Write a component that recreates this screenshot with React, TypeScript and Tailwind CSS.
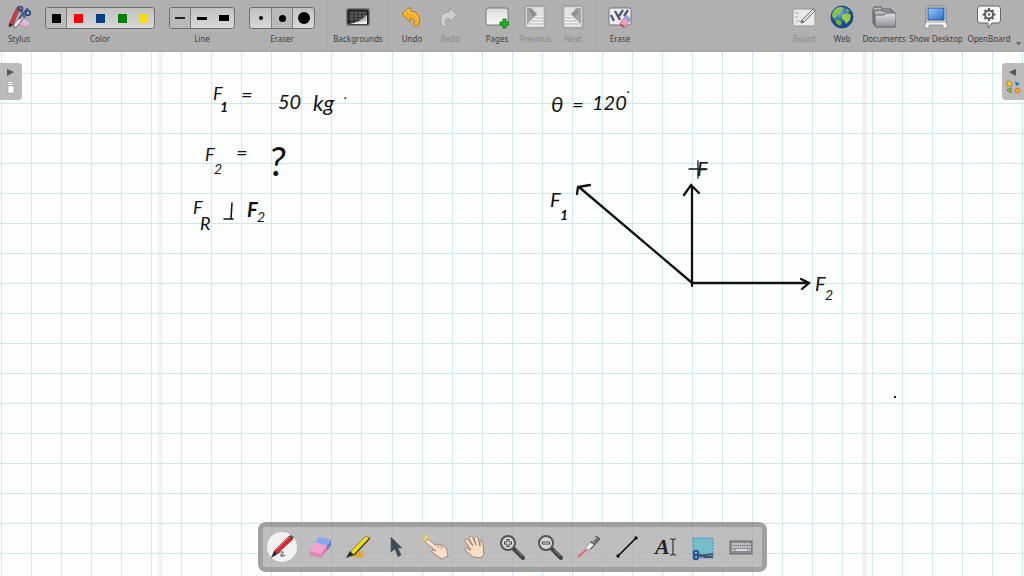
import type { ReactNode } from "react";
import clsx from "clsx";

/* ---------- top bar icons, 24 x 24 ---------- */

function Svg({ children, size = 24 }: { children: ReactNode; size?: number }) {
  return (
    <svg width={size} height={size} viewBox={`0 0 ${size} ${size}`} fill="none" aria-hidden="true">
      {children}
    </svg>
  );
}

const StylusIcon = () => (
  <Svg>
    <path d="M2 19 L10 2 L13 3.500 L6 20 L2 22Z" fill="#cf3a3a" stroke="#8c3b3b" strokeWidth=".6" />
    <path d="M2 22 L2.500 18.500 L6 20Z" fill="#222" />
    <path d="M7 19 L16 8 L18.500 10 L10 21.500 L7 23Z" fill="#e8e8ee" stroke="#555a70" strokeWidth=".8" />
    <path d="M13 4 L18 13 M21 3 L12 14" stroke="#47608f" strokeWidth="2.200" />
    <circle cx="13.500" cy="3.500" r="2" stroke="#2f4678" strokeWidth="1.700" />
    <circle cx="21" cy="8" r="2.300" stroke="#2f4678" strokeWidth="1.700" />
    <path d="M12 19 L17 14 L23 18 L18 23Z" fill="#eda6cb" stroke="#b87c9c" strokeWidth=".6" />
    <path d="M15 16 L17 14 L23 18 L20.500 20.500Z" fill="#cfc6ea" />
  </Svg>
);

const BackgroundsIcon = () => (
  <Svg>
    <rect x="0" y="3" width="24" height="18" rx="2" fill="#7c7c7c" />
    <rect x="2" y="5" width="20" height="14" rx="1" fill="#2a2a2a" stroke="#111" />
    <path d="M3 8H21M3 11H21M3 14H21M6 6V18M10 6V18M14 6V18M18 6V18" stroke="#707070" strokeWidth=".8" />
    <path d="M3 19 Q15 17 21 10 V19Z" fill="#eee" />
    <path d="M9 18 Q16 16 21 10 L20 16Z" fill="#b8b8b8" />
  </Svg>
);

const arrowPath = "M2 9 L10 2 V6 C18 6 22 13 18 21 C16 22 13 21 13 20 C16 16 14 13 10 13 V17 Z";

const UndoIcon = () => (
  <Svg>
    <path d={arrowPath} fill="#f5ae28" stroke="#bd7c16" />
    <path d="M4 9 L9 4.500 V7.500 C14 7.500 18 11 18 16" stroke="#ffd56c" />
  </Svg>
);

const RedoIcon = () => (
  <Svg>
    <g transform="matrix(-.95 0 0 .95 21 1)">
      <path d={arrowPath} fill="#cdcdcd" stroke="#9c9c9c" />
    </g>
  </Svg>
);

const PagesIcon = () => (
  <Svg>
    <defs>
      <linearGradient id="paper" x2="0" y2="1">
        <stop stopColor="#dadada" />
        <stop offset="1" stopColor="#fafafa" />
      </linearGradient>
    </defs>
    <rect x="1" y="3" width="22" height="17" rx="2" fill="url(#paper)" stroke="#777" />
    <path d="M18 14h3v3h3v3h-3v3h-3v-3h-3v-3h3z" fill="#16bc16" stroke="#15771b" />
  </Svg>
);

function PageTurn() {
  return (
    <>
      <rect x="2" y="1" width="20" height="22" rx="2" fill="#d2d2d2" stroke="#8f8f8f" />
      <path d="M4 3 H9 L14 9 L4 19Z" fill="#a3a3a3" />
      <path d="M5 3 L14 9 L10 12Z" fill="#8c8c8c" />
      <path d="M9 3 L14 9 V11 H20 V3Z" fill="#e2e2e2" />
      <path d="M4 21 L13 11 H20 V21Z" fill="#f2f2f2" />
      <path d="M12 13H20M9 16H20M6 19H20" stroke="#b0b0b0" />
    </>
  );
}

const PreviousIcon = () => (
  <Svg>
    <PageTurn />
  </Svg>
);

const NextIcon = () => (
  <Svg>
    <g transform="matrix(-1 0 0 1 24 0)">
      <PageTurn />
    </g>
  </Svg>
);

const EraseIcon = () => (
  <Svg>
    <rect x="1" y="3" width="22" height="17" rx="2" fill="#eee" stroke="#777" />
    <path d="M3 10 L6 16 M7 6 L12 15 M15 5 L11 11 M20 5 L16 11" stroke="#4a5870" strokeWidth="2.300" />
    <path d="M12 18 L18 10 L23 14 L17 22Z" fill="#ef9bc2" stroke="#aa7290" strokeWidth=".6" />
    <path d="M18 10 L23 14 L21 17 L16 13Z" fill="#88a7e5" />
    <path d="M12 18 L17 22 L16 23 L12 20Z" fill="#d14444" />
  </Svg>
);

const BoardIcon = () => (
  <Svg>
    <rect x="1" y="4" width="22" height="17" rx="1" fill="#eaeaea" stroke="#999" />
    <path d="M3 8H7M3 12H6M4 17C7 14 9 17 11 18" stroke="#aaa" />
    <path d="M9 18 L10 15 L21 4 L23 6 L12 17Z" fill="#ddd" stroke="#777" />
    <path d="M9 18 L10 15 L12 17Z" fill="#666" />
  </Svg>
);

const WebIcon = () => (
  <Svg>
    <defs>
      <radialGradient id="globe" cx=".4" cy=".3">
        <stop stopColor="#71aee9" />
        <stop offset="1" stopColor="#174a91" />
      </radialGradient>
    </defs>
    <circle cx="12" cy="12" r="11" fill="url(#globe)" stroke="#234671" />
    <path d="M3 7 Q6 2 11 2 L14 4 L11 6 L10 9 L7 10 L5 14 L2 11Z" fill="#89c54b" />
    <path d="M12 10 L17 8 L21 10 L20 15 L16 19 L14 15 L12 14Z" fill="#9acb45" />
    <path d="M6 14 L10 15 L12 18 L10 21 L6 18Z" fill="#73af3d" />
    <path d="M16 4 L20 6 L17 7Z" fill="#a4ce57" />
  </Svg>
);

// filled panels rather than a line icon: the folders overlap
const DocumentsIcon = () => (
  <Svg>
    <defs>
      <linearGradient id="folder" x2="0" y2="1">
        <stop stopColor="#dedee2" />
        <stop offset="1" stopColor="#8f9299" />
      </linearGradient>
    </defs>
    <path d="M1 18 V4 L2 2 H9 L10 4 H19 V18Z" fill="#c2c3c7" stroke="#51545a" />
    <path d="M2 20 V7 L3 5 H10 L11 6 H21 V20Z" fill="#b4b6bb" stroke="#51545a" />
    <path d="M3 21 V10 H12 L14 8 H24 V21 L23 22 H4Z" fill="url(#folder)" stroke="#5d6067" />
  </Svg>
);

const DesktopIcon = () => (
  <Svg>
    <defs>
      <linearGradient id="screen" x2="1" y2="1">
        <stop stopColor="#9dcbfb" />
        <stop offset="1" stopColor="#256dc8" />
      </linearGradient>
    </defs>
    <rect x="2" y="1" width="20" height="17" rx="1" fill="#eee" stroke="#777" />
    <rect x="4" y="3" width="16" height="12" fill="url(#screen)" stroke="#234f91" />
    <path d="M1 23 V19 L3 17 H21 L23 19 V23 H19 V20 H5 V23Z" fill="#f5f5f5" stroke="#888" strokeWidth=".7" />
  </Svg>
);

const OpenBoardIcon = () => (
  <Svg>
    <path d="M2 1 H22 L23.500 3 V16 L22 18 H15 L11 23 V18 H2 L.5 16 V3Z" fill="#f5f5f5" stroke="#666" />
    <circle cx="12" cy="9.500" r="4" stroke="#5c5c5c" strokeWidth="2" />
    <path
      d="M12 3V5M12 14V16M5.500 9.500H8M16 9.500H18.500M7.500 5L9 6.500M15 12.500L16.500 14M16.500 5L15 6.500M9 12.500L7.500 14"
      stroke="#5c5c5c"
      strokeWidth="2"
    />
    <circle cx="12" cy="9.500" r="1.200" fill="#5c5c5c" />
  </Svg>
);

/* ---------- palette icons, 32 x 32 ---------- */

const PenIcon = () => (
  <Svg size={32}>
    <circle cx="16" cy="16" r="15" fill="#f2f2f2" />
    <path d="M8 25 C15 19 20 20 15 24 C14 26 18 25 19 24" stroke="#666" strokeWidth="1.200" />
    <path d="M8 20 L23 5 L27 8 L11 23Z" fill="#d52a2c" stroke="#8c3535" strokeWidth=".7" />
    <path d="M10 19 L23 6" stroke="#f18b86" />
    <path d="M23 5 L25 4 L28 6 L26 9Z" fill="#555" />
    <path d="M5 27 L8 20 L11 23Z" fill="#292929" />
  </Svg>
);

const RubberIcon = () => (
  <Svg size={32}>
    <path d="M5 20 L15 6 L27 9 V14 L17 27 L5 24Z" fill="#d87fae" />
    <path d="M5 20 L15 6 L27 9 L17 23Z" fill="#f3a4cd" />
    <path d="M11 11 L15 6 L27 9 L23 15Z" fill="#86aaf0" />
    <path d="M23 15 L27 9 V14 L23 20Z" fill="#6080c5" />
    <path d="M5 20 L17 23 V27 L5 24Z" fill="#db8fb5" />
  </Svg>
);

const MarkerIcon = () => (
  <Svg size={32}>
    <path d="M8 26 L16 21 L22 20 L20 23 L23 25 L18 27 L13 26Z" fill="#e0a93a" />
    <path d="M8 21 L24 5 L28 7 L12 24Z" fill="#f5dd18" stroke="#6f6925" strokeWidth=".7" />
    <path d="M12 24 L28 7" stroke="#3d3a20" strokeWidth="1.200" />
    <path d="M8 20 L12 24 L4 27Z" fill="#292929" />
  </Svg>
);

const PointerIcon = () => (
  <Svg size={32}>
    <path d="M10 6 L21 17 L17 17 L20 24 L17 26 L14 18 L10 21Z" fill="#3f4856" stroke="#606978" strokeWidth=".7" />
  </Svg>
);

const FingerIcon = () => (
  <Svg size={32}>
    <path d="M7 2V13M1 8H13M3 4L11 12M11 4L3 12" stroke="#e5dc65" strokeWidth="1.200" strokeDasharray="2 1" />
    <path
      d="M7 9 C9 7 11 10 16 14 L18 13 L21 14 L23 14 L26 16 C28 17 28 21 29 25 L23 28 C20 26 17 25 13 21 C12 19 14 18 17 20 L7 12 C6 11 6 10 7 9Z"
      fill="#f9ddc6"
      stroke="#a08270"
    />
    <path d="M18 14L20 17M22 15L23 18" stroke="#b69581" />
  </Svg>
);

const HandIcon = () => (
  <Svg size={32}>
    <path
      d="M15 26 L8 20 C5 17 8 16 10 18 L13 19 L7 10 C6 8 9 7 10 9 L15 15 L11 7 C11 4 14 5 15 7 L18 14 L16 7 C17 4 19 5 20 7 L22 15 L22 10 C24 8 25 11 25 14 L26 23 L23 27 Z"
      fill="#f9ddc6"
      stroke="#a08270"
    />
  </Svg>
);

function MagnifierIcon({ plus }: { plus?: boolean }) {
  return (
    <Svg size={32}>
      <path d="M18 18 L27 27" stroke="#444" strokeWidth="4" strokeLinecap="round" />
      <path d="M20 19 L26 25" stroke="#888" />
      <circle cx="12" cy="12" r="7" fill="#d7d7d7" stroke="#555" strokeWidth="2" />
      <path d={plus ? "M8 12H16M12 8V16" : "M8 12H16"} stroke="#444" strokeWidth="3" />
      <path d={plus ? "M9 12H15M12 9V15" : "M9 12H15"} stroke="#fff" />
    </Svg>
  );
}

const LaserIcon = () => (
  <Svg size={32}>
    <path d="M5 26 L14 18" stroke="#e66767" strokeWidth="2" />
    <path d="M14 16 L23 5 L27 8 L18 18Z" fill="#777" stroke="#4c4c4c" />
    <path d="M12 18 L17 11 L21 14 L17 18 L13 19Z" fill="#eee" stroke="#777" strokeWidth=".6" />
    <path d="M19 10 L23 6" stroke="#d2d2d2" strokeWidth="1.500" />
  </Svg>
);

const LineIcon = () => (
  <Svg size={32}>
    <path d="M7 25 L25 7" stroke="#111" strokeWidth="1.700" />
    <circle cx="7" cy="25" r="1.700" fill="#111" />
    <circle cx="25" cy="7" r="1.700" fill="#111" />
  </Svg>
);

const TextIcon = () => (
  <Svg size={32}>
    <text x="5" y="23" fontFamily="'Liberation Serif', serif" fontSize="22" fontStyle="italic" fontWeight="700" fill="#222">
      A
    </text>
    <path d="M20 8 H22 L23 9 L24 8 H26 M23 9 V23 M20 24 H22 L23 23 L24 24 H26" stroke="#333" strokeWidth="1.200" />
  </Svg>
);

const CaptureIcon = () => (
  <Svg size={32}>
    <rect x="5" y="7" width="20" height="20" fill="#75bfca" stroke="#5289d5" strokeDasharray="2 1" />
    <circle cx="8" cy="22" r="2.300" stroke="#244d95" strokeWidth="1.800" />
    <circle cx="8" cy="26" r="2.300" stroke="#244d95" strokeWidth="1.800" />
    <path d="M10 23 L17 26 H25M10 25 L17 24 L25 23" stroke="#455572" strokeWidth="2" />
  </Svg>
);

const KeyboardIcon = () => (
  <Svg size={32}>
    <rect x="4" y="10" width="22" height="13" fill="#8b8d94" stroke="#666870" />
    <path d="M6 13H25M6 16H25M6 19H9M22 19H25" stroke="#e6e6e8" strokeWidth="1.600" strokeDasharray="1.500 .7" />
    <path d="M10 19H21" stroke="#eee" strokeWidth="1.600" />
  </Svg>
);

/* ---------- top bar ---------- */

type ToolProps = { label: string; icon: ReactNode; width?: string; disabled?: boolean };

function Tool({ label, icon, width = "w-[38px]", disabled }: ToolProps) {
  return (
    <button
      disabled={disabled}
      className={clsx(
        "flex shrink-0 flex-col items-center gap-1 pt-[5px] whitespace-nowrap",
        width,
        disabled ? "text-[#8b8b8b]" : "text-[#404040]",
      )}
    >
      {icon}
      <span className="leading-3">{label}</span>
    </button>
  );
}

type Choice = { name: string; mark: string };

const colors: Choice[] = [
  { name: "Black", mark: "size-[9px] bg-black" },
  { name: "Red", mark: "size-[9px] bg-[#fe0000]" },
  { name: "Blue", mark: "size-[9px] bg-[#003f85]" },
  { name: "Green", mark: "size-[9px] bg-[#008000]" },
  { name: "Yellow", mark: "size-[9px] bg-[#ffdf00]" },
];

const lines: Choice[] = [
  { name: "Fine", mark: "h-[2px] w-[10px] bg-[#222222]" },
  { name: "Medium", mark: "h-[3px] w-[10px] bg-black" },
  { name: "Strong", mark: "h-[6px] w-[10px] bg-black" },
];

const erasers: Choice[] = [
  { name: "Small", mark: "size-1 rounded-full bg-black" },
  { name: "Medium", mark: "size-[7px] rounded-full bg-black" },
  { name: "Large", mark: "size-3 rounded-full bg-black" },
];

function ChoiceGroup({ label, choices, active }: { label: string; choices: Choice[]; active: number }) {
  return (
    <div role="group" aria-label={label} className="flex shrink-0 flex-col items-center gap-1 pt-[7px]">
      <div className="flex h-[22px] overflow-hidden rounded-[3px] border border-[#707070] bg-linear-to-b from-[#c2c2c2] to-[#d8d8d8]">
        {choices.map((c, i) => (
          <button
            key={c.name}
            aria-label={c.name}
            aria-pressed={i === active}
            className={clsx(
              "flex w-[22px] items-center justify-center first:w-[21px] last:w-[21px]",
              i === active && "bg-[#b9b9b9]",
              i === active && i > 0 && "border-l border-[#808080]",
              i === active && "border-r border-[#808080]",
            )}
          >
            <span className={c.mark} />
          </button>
        ))}
      </div>
      <span className="leading-3 text-[#404040]">{label}</span>
    </div>
  );
}

function TopBar() {
  return (
    <header className="flex h-[52px] justify-between border-b border-[#a4a4a4] bg-[#b0b0b0] text-[8px]">
      <div className="flex">
        <Tool label="Stylus" icon={<StylusIcon />} />
        <div className="flex gap-[14px] pr-3 pl-[7px]">
          <ChoiceGroup label="Color" choices={colors} active={0} />
          <ChoiceGroup label="Line" choices={lines} active={0} />
          <ChoiceGroup label="Eraser" choices={erasers} active={1} />
        </div>
        <div className="flex border-x border-[#aaaaaa]">
          <Tool label="Backgrounds" icon={<BackgroundsIcon />} width="w-[60px]" />
        </div>
        <div className="flex border-r border-[#aaaaaa] px-1">
          <Tool label="Undo" icon={<UndoIcon />} />
          <Tool label="Redo" icon={<RedoIcon />} disabled />
        </div>
        <div className="flex border-r border-[#aaaaaa] px-1">
          <Tool label="Pages" icon={<PagesIcon />} />
          <Tool label="Previous" icon={<PreviousIcon />} disabled />
          <Tool label="Next" icon={<NextIcon />} disabled />
        </div>
        <div className="flex px-1">
          <Tool label="Erase" icon={<EraseIcon />} />
        </div>
      </div>
      <div className="flex">
        <Tool label="Board" icon={<BoardIcon />} disabled />
        <Tool label="Web" icon={<WebIcon />} />
        <Tool label="Documents" icon={<DocumentsIcon />} width="w-[46px]" />
        <Tool label="Show Desktop" icon={<DesktopIcon />} width="w-[58px]" />
        <Tool label="OpenBoard" icon={<OpenBoardIcon />} width="w-12" />
        <button aria-label="More" className="flex w-[11px] items-end justify-center pb-[5px]">
          <svg width="5" height="4" viewBox="0 0 5 4" aria-hidden="true">
            <path d="M0 0H5L2.500 3.500Z" fill="#666" />
          </svg>
        </button>
      </div>
    </header>
  );
}

/* ---------- board ---------- */

// page coordinates: the board starts under the 52px bar
const BAR = 52;
const PITCH = 30.04;

const notes = [
  { t: "F", x: 213, y: 100, s: 18 },
  { t: "1", x: 220, y: 112, s: 14, bold: true },
  { t: "=", x: 241, y: 102, s: 20 },
  { t: "50", x: 278, y: 109, s: 20 },
  { t: "kg", x: 313, y: 111, s: 22 },
  { t: ".", x: 344, y: 99, s: 14 },
  { t: "F", x: 205, y: 161, s: 18 },
  { t: "2", x: 214, y: 174, s: 14 },
  { t: "=", x: 236, y: 160, s: 20 },
  { t: "?", x: 269, y: 176, s: 40 },
  { t: "F", x: 193, y: 214, s: 18 },
  { t: "R", x: 200, y: 230, s: 18 },
  { t: "F", x: 247, y: 217, s: 20, bold: true },
  { t: "2", x: 257, y: 222, s: 14 },
  { t: "θ", x: 551, y: 112, s: 22 },
  { t: "=", x: 572, y: 112, s: 20 },
  { t: "120", x: 592, y: 110, s: 20 },
  { t: ".", x: 627, y: 93, s: 14 },
  { t: "F", x: 697, y: 176, s: 20 },
  { t: "F", x: 550, y: 207, s: 20 },
  { t: "1", x: 560, y: 220, s: 14, bold: true },
  { t: "F", x: 815, y: 291, s: 20 },
  { t: "2", x: 825, y: 300, s: 14 },
];

function Board() {
  return (
    <svg className="w-full flex-1 bg-[#fdffff]" role="img" aria-label="Whiteboard">
      <g transform={`translate(0 ${-BAR})`}>
        <rect x="158" y="52" width="5" height="100%" fill="#f4f3f3" />
        <rect x="862" y="52" width="5" height="100%" fill="#f1f1f1" />
        {Array.from({ length: 90 }, (_, i) => (
          <rect key={`v${i}`} x={Math.round(1 + i * PITCH)} y="52" width="1" height="100%" fill="#cfebef" />
        ))}
        {Array.from({ length: 60 }, (_, i) => (
          <rect key={`h${i}`} x="0" y={Math.round(72.6 + i * PITCH)} width="100%" height="1" fill="#cfe9eb" />
        ))}

        <g fill="#111" fontFamily="Lato, sans-serif" fontStyle="italic">
          {notes.map((n, i) => (
            <text key={i} x={n.x} y={n.y} fontSize={n.s} fontWeight={n.bold ? 700 : 400}>
              {n.t}
            </text>
          ))}
        </g>

        <g stroke="#111" strokeWidth="2" strokeLinecap="round" fill="none">
          {/* perpendicular sign */}
          <path d="M232 203 L231 219 M224 219 H233" strokeWidth="1.500" />
          {/* resultant */}
          <path d="M692 286 V186 M684 195 L691 185 L699 193" strokeWidth="2.300" />
          <path d="M698 161 V178 M689 169 H707" strokeWidth="1.300" />
          {/* F1 */}
          <path d="M691 282 L579 187 M577 194 L578 187 L590 185" strokeWidth="2.300" />
          {/* F2 */}
          <path d="M692 283 H808 M801 279 L809 283 L802 289" strokeWidth="2.300" />
        </g>
        <rect x="894" y="396" width="2" height="2" fill="#222" />
      </g>
    </svg>
  );
}

function SideTabs() {
  return (
    <>
      <button
        aria-label="Open page list"
        className="absolute top-[63px] left-0 flex h-[37px] w-[22px] flex-col items-center justify-center rounded-r-[4px] bg-[#bbbbbb]"
      >
        <svg width="22" height="37" viewBox="0 0 22 37" aria-hidden="true">
          <path d="M7 6 L14 9 L7 13Z" fill="#555" />
          <path d="M8 18.500h5v2H8zM8 23h6v7H8z" fill="#fff" stroke="#888" strokeWidth=".5" />
          <path d="M8 21.500H13" stroke="#fff" />
        </svg>
      </button>
      <button
        aria-label="Open library"
        className="absolute top-[63px] right-0 flex h-[37px] w-[22px] flex-col items-center justify-center rounded-l-[4px] bg-[#bbbbbb]"
      >
        <svg width="22" height="37" viewBox="0 0 22 37" aria-hidden="true">
          <path d="M14 6 L7 9 L14 13Z" fill="#555" />
          <path d="M5 18H8L10 20V23H5Z" fill="#f0d12c" stroke="#a97c12" strokeWidth=".8" />
          <path d="M13 18L18 21L14 23Z" fill="#1c80b8" />
          <path d="M5 27L9 25V30Z" fill="#a9c83e" stroke="#556c18" strokeWidth=".8" />
          <circle cx="15.500" cy="27.500" r="2" fill="#f9c35d" stroke="#e97f18" strokeWidth="1.400" />
        </svg>
      </button>
    </>
  );
}

const palette = [
  { name: "Pen", icon: <PenIcon /> },
  { name: "Eraser", icon: <RubberIcon /> },
  { name: "Highlighter", icon: <MarkerIcon /> },
  { name: "Select", icon: <PointerIcon /> },
  { name: "Interact", icon: <FingerIcon /> },
  { name: "Scroll page", icon: <HandIcon /> },
  { name: "Zoom in", icon: <MagnifierIcon plus /> },
  { name: "Zoom out", icon: <MagnifierIcon /> },
  { name: "Laser pointer", icon: <LaserIcon /> },
  { name: "Draw line", icon: <LineIcon /> },
  { name: "Write text", icon: <TextIcon /> },
  { name: "Capture", icon: <CaptureIcon /> },
  { name: "Keyboard", icon: <KeyboardIcon /> },
];

function Palette() {
  return (
    <div className="absolute inset-x-0 bottom-1 flex justify-center">
      <div
        role="toolbar"
        aria-label="Board tools"
        className="flex h-[50px] w-[509px] items-center justify-between rounded-lg border-[5px] border-[#909090]/85 bg-[#a8a8a8]/75 bg-clip-padding"
      >
        {palette.map((p) => (
          <button key={p.name} aria-label={p.name} className="flex w-[38px] justify-center">
            {p.icon}
          </button>
        ))}
      </div>
    </div>
  );
}

export default function App() {
  return (
    <div className="relative flex min-h-screen flex-col overflow-hidden font-['Noto_Sans',sans-serif]">
      <TopBar />
      <main className="flex flex-1">
        <Board />
      </main>
      <SideTabs />
      <Palette />
    </div>
  );
}
